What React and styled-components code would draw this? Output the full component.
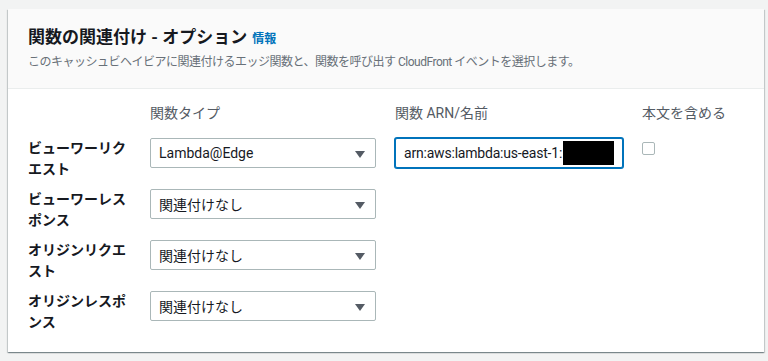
import React from 'react';
import styled, { createGlobalStyle } from 'styled-components';

const GlobalStyle = createGlobalStyle`
  html, body {
    margin: 0;
    padding: 0;
    background: #f2f3f3;
  }
  body {
    font-family: Roboto, 'Noto Sans CJK JP', sans-serif;
    color: #16191f;
  }
`;

const Page = styled.div`
  padding: 9px 4px 9px 8px;
`;

const Card = styled.section`
  background: #fff;
  box-shadow: 0 1px 1px 0 rgba(0, 28, 36, 0.3), 1px 1px 1px 0 rgba(0, 28, 36, 0.15),
    -1px 1px 1px 0 rgba(0, 28, 36, 0.15);
  height: 343px;
  display: flex;
  flex-direction: column;
`;

const Header = styled.header`
  background: #fafafa;
  border-bottom: 1px solid #eaeded;
  padding: 16px 20px 18px;
  display: flex;
  flex-direction: column;
  gap: 3px;
`;

const Title = styled.h2`
  margin: 0;
  font-size: 17px;
  line-height: 24px;
  font-weight: 700;
  color: #16191f;
`;

const InfoLink = styled.a`
  font-size: 12px;
  font-weight: 700;
  color: #0073bb;
  margin-left: 5px;
  text-decoration: none;
`;

const Description = styled.p`
  margin: 0;
  font-size: 12px;
  line-height: 16px;
  letter-spacing: -0.5px;
  color: #687078;
`;

const Body = styled.div`
  padding: 14px 20px 20px;
  display: grid;
  grid-template-columns: 103px 226px 228px 1fr;
  column-gap: 19px;
  row-gap: 10px;
  align-items: start;
`;

const ColumnHead = styled.div`
  font-size: 14px;
  line-height: 20px;
  color: #545b64;
  margin-bottom: 5px;
`;

const RowLabel = styled.div`
  font-size: 14px;
  line-height: 20.5px;
  font-weight: 700;
  color: #16191f;
  word-break: break-all;
`;

const SelectBox = styled.div`
  position: relative;
  height: 30px;
  box-sizing: border-box;
  border: 1px solid #aab7b8;
  border-radius: 2px;
  background: #fff;
  display: flex;
  align-items: center;
  padding: 0 30px 0 8px;
  font-size: 14px;
  color: #16191f;
`;

const Caret = styled.span`
  position: absolute;
  right: 10px;
  top: 12px;
  width: 0;
  height: 0;
  border-left: 5px solid transparent;
  border-right: 5px solid transparent;
  border-top: 7px solid #545b64;
`;

const TextInput = styled.div`
  height: 30px;
  box-sizing: border-box;
  border: 1px solid #0073bb;
  box-shadow: 0 0 0 1px #0073bb;
  border-radius: 2px;
  background: #fff;
  display: flex;
  align-items: center;
  padding: 0 8px;
  font-size: 14px;
  letter-spacing: -0.2px;
  color: #16191f;
  white-space: nowrap;
  overflow: hidden;
`;

const Redacted = styled.span`
  display: inline-block;
  width: 53px;
  height: 24px;
  background: #000;
  margin-left: 1px;
`;

const CheckCell = styled.div`
  padding-top: 4px;
`;

const Checkbox = styled.span`
  display: block;
  width: 11px;
  height: 11px;
  border: 1px solid #aab7b8;
  border-radius: 2px;
  background: #fff;
`;

const Empty = styled.div``;

function Select({ value }) {
  return (
    <SelectBox>
      {value}
      <Caret />
    </SelectBox>
  );
}

const rows = [
  { label: 'ビューワーリクエスト', value: 'Lambda@Edge', first: true },
  { label: 'ビューワーレスポンス', value: '関連付けなし' },
  { label: 'オリジンリクエスト', value: '関連付けなし' },
  { label: 'オリジンレスポンス', value: '関連付けなし' },
];

export default function App() {
  return (
    <>
      <GlobalStyle />
      <Page>
        <Card>
          <Header>
            <Title>
              関数の関連付け - オプション<InfoLink href="#">情報</InfoLink>
            </Title>
            <Description>
              このキャッシュビヘイビアに関連付けるエッジ関数と、関数を呼び出す CloudFront イベントを選択します。
            </Description>
          </Header>
          <Body>
            <Empty />
            <ColumnHead>関数タイプ</ColumnHead>
            <ColumnHead>関数 ARN/名前</ColumnHead>
            <ColumnHead>本文を含める</ColumnHead>
            {rows.map((row) => (
              <React.Fragment key={row.label}>
                <RowLabel>{row.label}</RowLabel>
                <Select value={row.value} />
                {row.first ? (
                  <TextInput>
                    arn:aws:lambda:us-east-1:
                    <Redacted />
                  </TextInput>
                ) : (
                  <Empty />
                )}
                {row.first ? (
                  <CheckCell>
                    <Checkbox />
                  </CheckCell>
                ) : (
                  <Empty />
                )}
              </React.Fragment>
            ))}
          </Body>
        </Card>
      </Page>
    </>
  );
}
